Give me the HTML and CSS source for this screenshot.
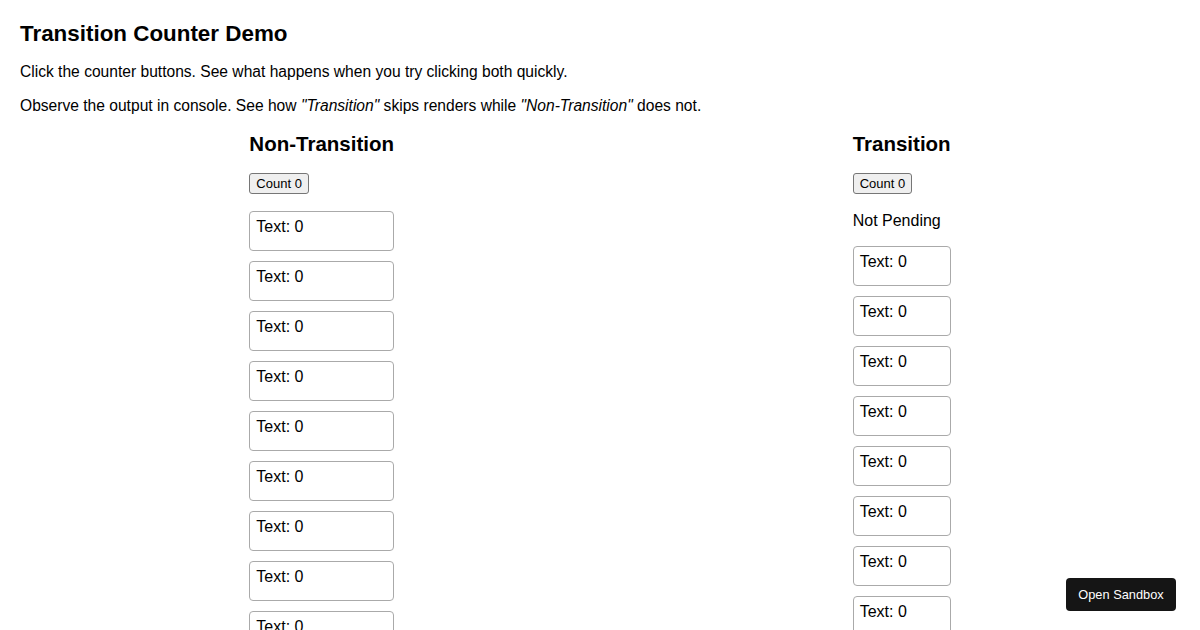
FILE: index.html
```html
<!DOCTYPE html>
<html>
<head>
<meta charset="utf-8">
<link rel="stylesheet" href="styles.css">
</head>
<body>
<h1 class="title">Transition Counter Demo</h1>
<p class="para">Click the counter buttons. See what happens when you try clicking both quickly.</p>
<p class="para">Observe the output in console. See how <em>"Transition"</em> skips renders while <em>"Non-Transition"</em> does not.</p>
<div class="columns">
  <div class="col">
    <h3 class="col-title">Non-Transition</h3>
    <div class="btn-row"><button class="count-btn">Count 0</button></div>
    <div class="box">Text: 0</div>
    <div class="box">Text: 0</div>
    <div class="box">Text: 0</div>
    <div class="box">Text: 0</div>
    <div class="box">Text: 0</div>
    <div class="box">Text: 0</div>
    <div class="box">Text: 0</div>
    <div class="box">Text: 0</div>
    <div class="box">Text: 0</div>
    <div class="box">Text: 0</div>
  </div>
  <div class="col">
    <h3 class="col-title">Transition</h3>
    <div class="btn-row"><button class="count-btn">Count 0</button></div>
    <div class="status">Not Pending</div>
    <div class="box">Text: 0</div>
    <div class="box">Text: 0</div>
    <div class="box">Text: 0</div>
    <div class="box">Text: 0</div>
    <div class="box">Text: 0</div>
    <div class="box">Text: 0</div>
    <div class="box">Text: 0</div>
    <div class="box">Text: 0</div>
    <div class="box">Text: 0</div>
    <div class="box">Text: 0</div>
  </div>
</div>
<button class="sandbox-btn">Open Sandbox</button>
</body>
</html>
```
FILE: styles.css
```css
html, body {
  margin: 0;
  background: #fff;
}
body {
  padding: 20px;
  font-family: "Liberation Sans", Arial, sans-serif;
  font-size: 16px;
  color: #000;
  overflow: hidden;
  height: 590px;
}
.title {
  font-size: 22.4px;
  font-weight: bold;
  line-height: 28px;
  margin: 0 0 15px;
}
.para {
  margin: 0 0 16px;
  line-height: 18px;
  font-size: 15.6px;
}
.columns {
  display: flex;
  justify-content: space-around;
}
.col {
  display: flex;
  flex-direction: column;
  align-items: stretch;
}
.col-title {
  font-size: 20.5px;
  font-weight: bold;
  line-height: 24px;
  margin: 1px 0 17px;
}
.btn-row {
  margin-bottom: 17px;
}
.count-btn {
  font-family: "Liberation Sans", Arial, sans-serif;
  font-size: 13px;
  line-height: 15px;
  height: 21px;
  padding: 1px 6px;
  background: #efefef;
  border: 1px solid #767676;
  border-radius: 3px;
  color: #000;
  margin: 0;
}
.status {
  line-height: 18px;
  margin: 1px 0 16px;
}
.box {
  box-sizing: border-box;
  height: 40px;
  padding: 6px 6px 4px;
  line-height: 18px;
  border: 1px solid #aaa;
  border-radius: 4px;
  margin: 0 0 10px;
}
.sandbox-btn {
  position: fixed;
  right: 24px;
  bottom: 19px;
  width: 110px;
  height: 33px;
  background: #151515;
  color: #fff;
  border: none;
  border-radius: 4px;
  font-family: "Liberation Sans", Arial, sans-serif;
  font-size: 12.8px;
  padding: 0;
}
```
